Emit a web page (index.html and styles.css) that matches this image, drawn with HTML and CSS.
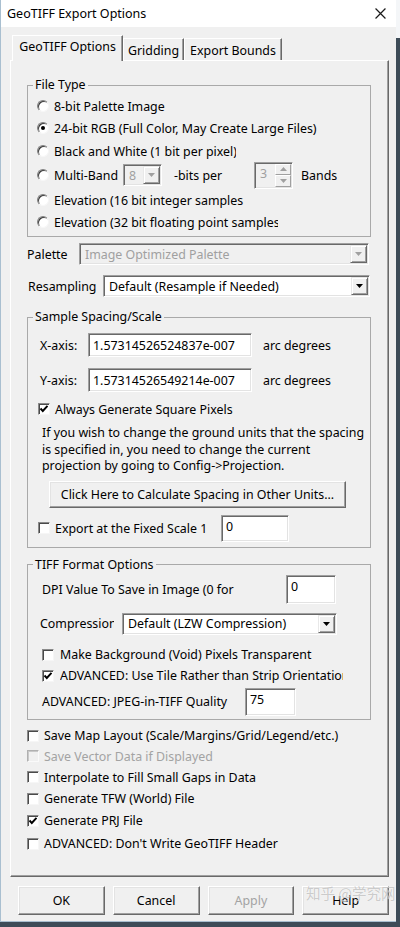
FILE: index.html
```html
<!DOCTYPE html>
<html lang="en">
<head>
<meta charset="utf-8">
<title>GeoTIFF Export Options</title>
<link rel="stylesheet" href="styles.css">
</head>
<body>
<div class="window">
  <div class="titlebar">
    <span class="title">GeoTIFF Export Options</span>
    <svg class="close" viewBox="0 0 10 10" width="11" height="11"><path d="M0.5 0.5 L9.5 9.5 M9.5 0.5 L0.5 9.5" stroke="#1a1a1a" stroke-width="1.1" fill="none"/></svg>
  </div>

  <div class="tabs">
    <div class="tab active w-geo">GeoTIFF Options</div>
    <div class="tab w-grid">Gridding</div>
    <div class="tab w-bounds">Export Bounds</div>
  </div>

  <div class="panel">
    <fieldset class="group ft">
      <legend>File Type</legend>
      <div class="opt h22"><i class="radio"></i><span>8-bit Palette Image</span></div>
      <div class="opt h22"><i class="radio on"></i><span>24-bit RGB (Full Color, May Create Large Files)</span></div>
      <div class="opt h24"><i class="radio"></i><span class="clip w182">Black and White (1 bit per pixel)</span></div>
      <div class="opt h24 mb">
        <i class="radio mr5"></i><span class="fix w69">Multi-Band</span>
        <div class="combo dis w39 h22c"><span class="val">8</span><span class="drop"><svg viewBox="0 0 7 4" width="7" height="4"><polygon points="0,0 7,0 3.5,4" fill="#a0a0a0"/></svg></span></div>
        <span class="fix w80 ml12">-bits per</span>
        <div class="spin"><span class="val">3</span><span class="spinbtns"><span class="sb"><svg viewBox="0 0 7 4" width="7" height="4"><polygon points="0,4 7,4 3.5,0" fill="#a0a0a0"/></svg></span><span class="sb"><svg viewBox="0 0 7 4" width="7" height="4"><polygon points="0,0 7,0 3.5,4" fill="#a0a0a0"/></svg></span></span></div>
        <span class="ml8">Bands</span>
      </div>
      <div class="opt h26"><i class="radio"></i><span>Elevation (16 bit integer samples</span></div>
      <div class="opt h18"><i class="radio"></i><span class="clip w224">Elevation (32 bit floating point samples)</span></div>
    </fieldset>

    <div class="line palette">
      <span class="fix w52">Palette</span>
      <div class="combo dis w290 h22c"><span class="val">Image Optimized Palette</span><span class="drop"><svg viewBox="0 0 7 4" width="7" height="4"><polygon points="0,0 7,0 3.5,4" fill="#a0a0a0"/></svg></span></div>
    </div>
    <div class="line resamp">
      <span class="fix w75">Resampling</span>
      <div class="combo w267 h22c"><span class="val">Default (Resample if Needed)</span><span class="drop"><svg viewBox="0 0 7 4" width="7" height="4"><polygon points="0,0 7,0 3.5,4" fill="#000"/></svg></span></div>
    </div>

    <fieldset class="group sp">
      <legend>Sample Spacing/Scale</legend>
      <div class="line axis">
        <span class="fix w48">X-axis:</span>
        <div class="edit w164 h24e mid">1.57314526524837e-007</div>
        <span class="ml11">arc degrees</span>
      </div>
      <div class="line axis mt11">
        <span class="fix w48">Y-axis:</span>
        <div class="edit w164 h24e mid">1.57314526549214e-007</div>
        <span class="ml11">arc degrees</span>
      </div>
      <div class="opt h18 mt8 pl10"><i class="check on"><svg viewBox="0 0 10 10" width="10" height="10"><path d="M1.5 4.5 L3.8 7 L8.5 1.8" stroke="#000" stroke-width="1.9" fill="none"/></svg></i><span>Always Generate Square Pixels</span></div>
      <p class="note">If you wish to change the ground units that the spacing<br>is specified in, you need to change the current<br>projection by going to Config-&gt;Projection.</p>
      <div class="btn calc">Click Here to Calculate Spacing in Other Units...</div>
      <div class="opt h27 mt7 pl10"><i class="check"></i><span class="fix w161">Export at the Fixed Scale 1</span><div class="edit w68 h27e top">0</div></div>
    </fieldset>

    <fieldset class="group tf">
      <legend>TIFF Format Options</legend>
      <div class="line pl14 h29">
        <span class="fix w244">DPI Value To Save in Image (0 for</span>
        <div class="edit w50 h29e top">0</div>
      </div>
      <div class="line pl12 mt9">
        <span class="clip w82"><span class="clip w74">Compression</span></span>
        <div class="combo w215 h22c"><span class="val">Default (LZW Compression)</span><span class="drop"><svg viewBox="0 0 7 4" width="7" height="4"><polygon points="0,0 7,0 3.5,4" fill="#000"/></svg></span></div>
      </div>
      <div class="opt h18 mt11 pl14 g6"><i class="check"></i><span>Make Background (Void) Pixels Transparent</span></div>
      <div class="opt h18 mt3 pl14 g6"><i class="check on"><svg viewBox="0 0 10 10" width="10" height="10"><path d="M1.5 4.5 L3.8 7 L8.5 1.8" stroke="#000" stroke-width="1.9" fill="none"/></svg></i><span class="clip w283">ADVANCED: Use Tile Rather than Strip Orientation</span></div>
      <div class="line pl14 mt3 h28">
        <span class="fix w203">ADVANCED: JPEG-in-TIFF Quality</span>
        <div class="edit w51 h28e top">75</div>
      </div>
    </fieldset>

    <div class="checks">
      <div class="opt h20"><i class="check"></i><span>Save Map Layout (Scale/Margins/Grid/Legend/etc.)</span></div>
      <div class="opt h21 disabled"><i class="check dis"></i><span>Save Vector Data if Displayed</span></div>
      <div class="opt h21"><i class="check"></i><span>Interpolate to Fill Small Gaps in Data</span></div>
      <div class="opt h22"><i class="check"></i><span>Generate TFW (World) File</span></div>
      <div class="opt h22"><i class="check on"><svg viewBox="0 0 10 10" width="10" height="10"><path d="M1.5 4.5 L3.8 7 L8.5 1.8" stroke="#000" stroke-width="1.9" fill="none"/></svg></i><span>Generate PRJ File</span></div>
      <div class="opt h24"><i class="check"></i><span>ADVANCED: Don't Write GeoTIFF Header</span></div>
    </div>
  </div>

  <div class="buttons">
    <div class="btn">OK</div>
    <div class="btn">Cancel</div>
    <div class="btn disabled">Apply</div>
    <div class="btn">Help</div>
  </div>

  <div class="watermark">知乎 @学究网</div>
</div>
</body>
</html>
```

FILE: styles.css
```css
* { box-sizing: border-box; }
html, body { margin: 0; padding: 0; }
body {
  width: 400px;
  height: 927px;
  overflow: hidden;
  background: linear-gradient(to bottom, #f4f6f8 0, #f4f6f8 38px, #3e4c58 38px);
  font-family: "Noto Sans", "DejaVu Sans", sans-serif;
  font-size: 12.4px;
  color: #000;
}

.window {
  position: relative;
  width: 396px;
  height: 922px;
  background: #f0f0f0;
  border-left: 1px solid #a9bfd0;
  border-bottom: 1px solid #a9bfd0;
  display: flex;
  flex-direction: column;
}

.titlebar {
  height: 27px;
  flex: none;
  background: #fff;
  display: flex;
  align-items: center;
  justify-content: space-between;
  padding: 0 10px 0 6px;
  font-size: 12.5px;
}
.close { display: block; }

/* tabs */
.tabs {
  height: 33px;
  flex: none;
  display: flex;
  align-items: flex-end;
  padding-left: 11px;
}
.tab {
  height: 22px;
  display: flex;
  align-items: center;
  justify-content: center;
  border-top: 1px solid #fff;
  border-left: 1px solid #fff;
  border-right: 1px solid #696969;
  box-shadow: inset -1px 0 0 #a0a0a0;
  background: #f0f0f0;
  padding-top: 1px;
}
.tab.active {
  height: 26px;
  margin-bottom: -1px;
  position: relative;
  z-index: 1;
  padding-top: 0;
  padding-bottom: 4px;
}
.w-geo { width: 111px; }
.w-grid { width: 61px; }
.w-bounds { width: 98px; }

/* panel */
.panel {
  flex: none;
  margin-left: 9px;
  width: 379px;
  height: 817px;
  border-top: 1px solid #fff;
  border-left: 1px solid #fff;
  border-right: 1px solid #696969;
  border-bottom: 1px solid #696969;
  box-shadow: inset -1px -1px 0 #a0a0a0;
  padding: 16px 0 0 16px;
}

fieldset.group {
  margin: 0;
  width: 344px;
  min-inline-size: 0;
  border: 1px solid #a9a9a9;
  padding: 2px 0 0 0;
}
fieldset.group legend {
  margin-left: 5px;
  padding: 0 2px;
  line-height: 16px;
  height: 16px;
}
.ft { padding-bottom: 5px !important; }
.sp { margin-top: 12px !important; padding-top: 8px !important; padding-bottom: 5px !important; }
.tf { margin-top: 9px !important; padding-top: 2px !important; padding-bottom: 3px !important; }

.opt, .line {
  display: flex;
  align-items: center;
  white-space: nowrap;
}
.opt { gap: 5px; }
.ft .opt { padding-left: 9px; }
.ft .opt.mb { gap: 0; }
.mr5 { margin-right: 5px; }
.g6 { gap: 6px; }

.h18 { height: 18px; }
.h20 { height: 20px; }
.h21 { height: 21px; }
.h22 { height: 22px; }
.h24 { height: 24px; }
.h26 { height: 26px; }
.h27 { height: 27px; }
.h28 { height: 28px; }
.h29 { height: 29px; }

.mt3 { margin-top: 3px; }
.mt7 { margin-top: 7px; }
.mt8 { margin-top: 8px; }
.mt9 { margin-top: 9px; }
.mt11 { margin-top: 11px; }
.ml8 { margin-left: 8px; }
.ml11 { margin-left: 11px; }
.ml12 { margin-left: 12px; }
.pl10 { padding-left: 10px; }
.pl12 { padding-left: 12px; }
.pl14 { padding-left: 14px; }

.fix { display: block; flex: none; }
.clip { display: block; flex: none; overflow: hidden; white-space: nowrap; }
.w48 { width: 48px; }
.w52 { width: 52px; }
.w69 { width: 69px; }
.w74 { width: 74px; }
.w75 { width: 75px; }
.w80 { width: 80px; }
.w82 { width: 82px; }
.w161 { width: 161px; }
.w182 { width: 182px; }
.w203 { width: 203px; }
.w224 { width: 224px; }
.w244 { width: 244px; }
.w283 { width: 283px; }

/* radio & check */
.radio {
  flex: none;
  width: 12px;
  height: 12px;
  border-radius: 50%;
  background: #fff;
  border: 1px solid;
  border-color: #808080 #f6f6f6 #f6f6f6 #808080;
  box-shadow: inset 1px 1px 0 #3c3c3c;
  display: flex;
  align-items: center;
  justify-content: center;
}
.radio.on::after {
  content: "";
  width: 4px;
  height: 4px;
  border-radius: 50%;
  background: #000;
}
.check {
  flex: none;
  width: 12px;
  height: 12px;
  background: #fff;
  border: 1px solid;
  border-color: #8a8a8a #f6f6f6 #f6f6f6 #8a8a8a;
  box-shadow: inset 1px 1px 0 #4a4a4a;
  display: flex;
  align-items: center;
  justify-content: center;
}
.check svg { display: block; }
.check.dis { background: #f0f0f0; border-color: #b0b0b0 #fafafa #fafafa #b0b0b0; box-shadow: inset 1px 1px 0 #c8c8c8; }
.disabled { color: #a3a3a3; }

/* combos */
.combo {
  flex: none;
  display: flex;
  align-items: stretch;
  background: #fff;
  border: 1px solid;
  border-color: #a0a0a0 #fff #fff #a0a0a0;
  box-shadow: inset 1px 1px 0 #696969, inset -1px -1px 0 #e3e3e3;
  padding: 1px;
}
.combo .val {
  flex: 1;
  display: flex;
  align-items: center;
  padding-left: 4px;
  overflow: hidden;
  white-space: nowrap;
}
.combo .drop {
  flex: none;
  width: 17px;
  background: #f0f0f0;
  border: 1px solid;
  border-color: #e8e8e8 #696969 #696969 #e8e8e8;
  box-shadow: inset 1px 1px 0 #fff, inset -1px -1px 0 #a0a0a0;
  display: flex;
  align-items: center;
  justify-content: center;
}
.combo.dis { background: #f0f0f0; color: #a0a0a0; }
.h22c { height: 22px; }
.w39 { width: 39px; }
.w215 { width: 215px; }
.w267 { width: 267px; }
.w290 { width: 290px; }

.spin {
  flex: none;
  width: 39px;
  height: 27px;
  display: flex;
  background: #f0f0f0;
  color: #a0a0a0;
  border: 1px solid;
  border-color: #a0a0a0 #fff #fff #a0a0a0;
  box-shadow: inset 1px 1px 0 #696969, inset -1px -1px 0 #e3e3e3;
  padding: 1px;
}
.spin .val { flex: 1; padding: 1px 0 0 4px; }
.spinbtns { flex: none; width: 16px; display: flex; flex-direction: column; }
.sb {
  flex: 1;
  background: #f0f0f0;
  border: 1px solid;
  border-color: #fff #a0a0a0 #a0a0a0 #fff;
  display: flex;
  align-items: center;
  justify-content: center;
}

/* panel rows */
.palette { margin-top: 6px; height: 22px; }
.resamp { margin-top: 10px; height: 22px; padding-left: 1px; }
.axis { padding-left: 12px; height: 24px; }

.edit {
  flex: none;
  display: flex;
  background: #fff;
  border: 1px solid;
  border-color: #a0a0a0 #fff #fff #a0a0a0;
  box-shadow: inset 1px 1px 0 #696969, inset -1px -1px 0 #e3e3e3;
  padding: 0 4px;
  white-space: nowrap;
}
.edit.mid { align-items: center; }
.edit.top { align-items: flex-start; padding-top: 2px; }
.w50 { width: 50px; }
.w51 { width: 51px; }
.w68 { width: 68px; }
.w164 { width: 164px; }
.h24e { height: 24px; }
.h27e { height: 27px; }
.h28e { height: 28px; }
.h29e { height: 29px; }

.note {
  margin: 7px 0 0 0;
  padding-left: 14px;
  line-height: 16.5px;
  white-space: nowrap;
}

.btn {
  display: flex;
  align-items: center;
  justify-content: center;
  background: #f0f0f0;
  border: 1px solid;
  border-color: #fff #696969 #696969 #fff;
  box-shadow: inset -1px -1px 0 #a0a0a0, inset 1px 1px 0 #e3e3e3;
  white-space: nowrap;
}
.calc {
  margin: 6px 0 0 21px;
  width: 297px;
  height: 27px;
}

.checks { margin-top: 6px; }

/* bottom buttons */
.buttons {
  flex: none;
  margin-top: 9px;
  padding-left: 17px;
  width: 388px;
  display: grid;
  grid-template-columns: repeat(4, 1fr);
  column-gap: 8px;
}
.buttons .btn { height: 29px; }
.buttons .btn.disabled { color: #a3a3a3; }

.watermark {
  position: absolute;
  left: 305px;
  top: 882px;
  white-space: nowrap;
  font-family: "Noto Sans CJK SC", "Noto Sans", sans-serif;
  font-size: 14.5px;
  color: rgba(140, 140, 140, 0.45);
  text-shadow: 0 0 1px #fff;
  pointer-events: none;
}
```
